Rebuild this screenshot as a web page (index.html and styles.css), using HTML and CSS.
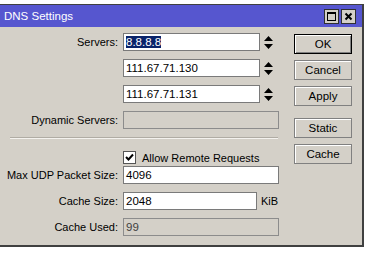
FILE: index.html
```html
<!DOCTYPE html>
<html lang="en">
<head>
    <meta charset="UTF-8">
    <title>DNS Settings</title>
    <link rel="stylesheet" href="styles.css">
</head>
<body>
    <div class="window">
        <div class="titlebar">
            <span class="title">DNS Settings</span>
            <div class="tb-buttons">
                <span class="tb-btn"><span class="max-box"></span></span>
                <span class="tb-btn">
                    <svg width="9" height="9" viewBox="0 0 9 9"><path d="M1.5 1.5L7.5 7.5M7.5 1.5L1.5 7.5" stroke="#000" stroke-width="2"/></svg>
                </span>
            </div>
        </div>
        <div class="content">
            <div class="form">
                <div class="row">
                    <label class="lbl">Servers:</label>
                    <div class="field"><span class="sel">8.8.8.8</span></div>
                    <span class="spin"><svg width="9" height="13" viewBox="0 0 9 13"><path d="M4.5 0L9 5H0Z M0 8H9L4.5 13Z" fill="#000"/></svg></span>
                </div>
                <div class="row">
                    <span class="lbl"></span>
                    <div class="field">111.67.71.130</div>
                    <span class="spin"><svg width="9" height="13" viewBox="0 0 9 13"><path d="M4.5 0L9 5H0Z M0 8H9L4.5 13Z" fill="#000"/></svg></span>
                </div>
                <div class="row">
                    <span class="lbl"></span>
                    <div class="field">111.67.71.131</div>
                    <span class="spin"><svg width="9" height="13" viewBox="0 0 9 13"><path d="M4.5 0L9 5H0Z M0 8H9L4.5 13Z" fill="#000"/></svg></span>
                </div>
                <div class="row dyn">
                    <label class="lbl">Dynamic Servers:</label>
                    <div class="field wide disabled"></div>
                </div>
                <div class="sep"></div>
                <div class="row check-row">
                    <span class="lbl"></span>
                    <span class="checkbox">
                        <svg width="9" height="9" viewBox="0 0 9 9"><path d="M1 4L3.5 6.5L8 1.5" stroke="#000" stroke-width="2" fill="none"/></svg>
                    </span>
                    <span class="check-text">Allow Remote Requests</span>
                </div>
                <div class="row">
                    <label class="lbl">Max UDP Packet Size:</label>
                    <div class="field wide">4096</div>
                </div>
                <div class="row">
                    <label class="lbl">Cache Size:</label>
                    <div class="field mid">2048</div>
                    <span class="unit">KiB</span>
                </div>
                <div class="row">
                    <label class="lbl">Cache Used:</label>
                    <div class="field wide disabled">99</div>
                </div>
            </div>
            <div class="buttons">
                <button class="btn default">OK</button>
                <button class="btn">Cancel</button>
                <button class="btn">Apply</button>
                <button class="btn gap">Static</button>
                <button class="btn">Cache</button>
            </div>
        </div>
    </div>
</body>
</html>
```

FILE: styles.css
```css
body {
    margin: 0;
    padding: 0;
    background: #fff;
    font-family: 'Liberation Sans', Arial, sans-serif;
    font-size: 11px;
    color: #000;
}
.window {
    margin-top: 4px;
    width: 362px;
    height: 240px;
    background: #d4d0c8;
    border-top: 1px solid #404040;
    border-right: 2px solid #404040;
    border-bottom: 2px solid #404040;
    box-sizing: content-box;
}
.titlebar {
    height: 22px;
    background: #5656cf;
    display: flex;
    align-items: center;
    justify-content: space-between;
    padding: 0 6px 0 4px;
}
.title {
    color: #fff;
    font-size: 11.5px;
}
.tb-buttons {
    display: flex;
    gap: 2px;
}
.tb-btn {
    width: 13px;
    height: 13px;
    background: #d4d0c8;
    border: 1px solid #303030;
    display: flex;
    align-items: center;
    justify-content: center;
}
.max-box {
    width: 7px;
    height: 6px;
    border: 1px solid #000;
    border-top-width: 2px;
    box-sizing: content-box;
}
.content {
    display: flex;
    padding: 6px 0 0 0;
}
.form {
    width: 290px;
}
.row {
    display: flex;
    align-items: center;
    height: 18px;
    margin-bottom: 8px;
}
.row.dyn {
    margin-top: 2px;
    margin-bottom: 8px;
}
.lbl {
    width: 118px;
    text-align: right;
    padding-right: 5px;
    flex: none;
    white-space: nowrap;
}
.field {
    width: 137px;
    height: 18px;
    box-sizing: border-box;
    background: #fff;
    border: 1px solid #7a7a7a;
    padding: 0 2px;
    line-height: 16px;
    font-size: 11.5px;
}
.field.wide {
    width: 156px;
}
.field.mid {
    width: 134px;
}
.field.disabled {
    background: #d4d0c8;
    border-color: #8c8c8c;
    color: #404040;
}
.sel {
    background: #0a246a;
    color: #fff;
}
.spin {
    margin-left: 4px;
    display: flex;
}
.sep {
    height: 0;
    border-top: 1px solid #b0aca4;
    border-bottom: 1px solid #f4f2ee;
    margin: 0 12px 12px 10px;
}
.check-row {
    height: 13px;
    margin-bottom: 2px;
}
.checkbox {
    width: 13px;
    height: 13px;
    box-sizing: border-box;
    border: 1px solid #555;
    background: #fff;
    display: flex;
    align-items: center;
    justify-content: center;
}
.check-text {
    margin-left: 6px;
}
.unit {
    margin-left: 4px;
}
.buttons {
    display: flex;
    flex-direction: column;
    padding-top: 1px;
    margin-left: 4px;
}
.btn {
    width: 58px;
    height: 20px;
    margin-bottom: 6px;
    background: #d4d0c8;
    border: 1px solid #808080;
    box-shadow: inset 1px 1px 0 #fff;
    font-family: 'Liberation Sans', Arial, sans-serif;
    font-size: 11.5px;
    color: #000;
    padding: 0;
}
.btn.default {
    border: 1px solid #000;
    box-shadow: inset 1px 1px 0 #fff, inset -1px -1px 0 #808080;
}
.btn.gap {
    margin-top: 6px;
}
```
